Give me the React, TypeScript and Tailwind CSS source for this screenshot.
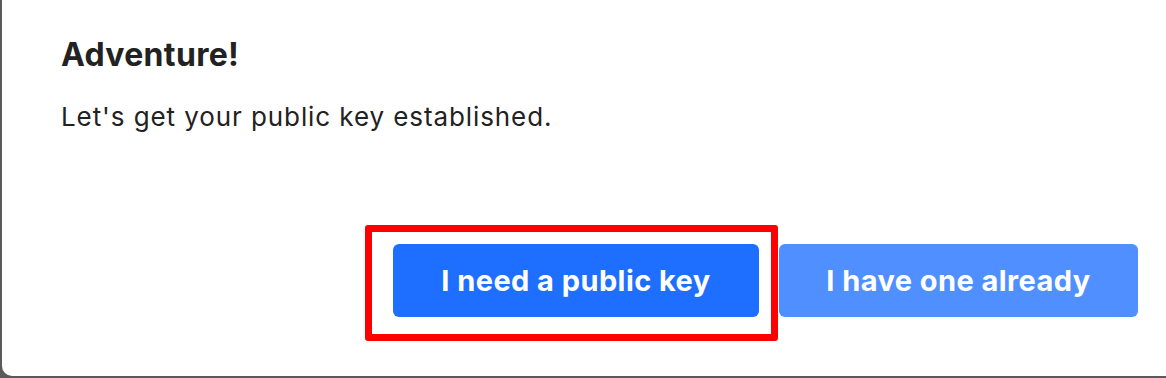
export default function App() {
  return (
    <div className="h-[378px] w-[1166px] overflow-hidden bg-[#5a5a5a] pl-[2px] pb-[2px]" style={{ fontFamily: 'Inter, "Liberation Sans", sans-serif' }}>
      <div className="flex h-full flex-col rounded-bl-[10px] bg-white pl-[59px] pr-[28px] pt-[37px] text-[#222222]">
        <h2 className="text-[32px] font-bold leading-[36px] tracking-[0.01em]">Adventure!</h2>
        <p className="mt-[28px] text-[26px] leading-[32px] tracking-[0.035em]">Let's get your public key established.</p>
        <div className="mt-[111px] flex justify-end gap-5">
          <div className="relative">
            <button className="h-[73px] w-[366px] rounded-[6px] bg-[#1e6fff] text-[29px] font-bold tracking-[0.015em] text-white">
              I need a public key
            </button>
            <div className="pointer-events-none absolute left-[-28px] top-[-19px] h-[116px] w-[413px] rounded-[3px] border-[7px] border-[#ff0000]" />
          </div>
          <button className="h-[73px] w-[359px] rounded-[6px] bg-[#4f8fff] text-[29px] font-bold tracking-[0.015em] text-white">
            I have one already
          </button>
        </div>
      </div>
    </div>
  );
}
